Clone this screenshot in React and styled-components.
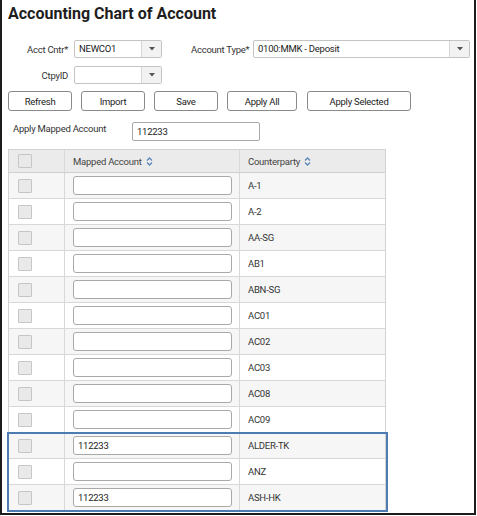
import React from 'react';
import styled, { createGlobalStyle } from 'styled-components';

const GlobalStyle = createGlobalStyle`
  html, body { margin: 0; padding: 0; background: #fff; }
  body { font-family: Roboto, "Liberation Sans", Arial, sans-serif; color: #333; }
`;

const rows = [
  { cp: 'A-1', val: '' },
  { cp: 'A-2', val: '' },
  { cp: 'AA-SG', val: '' },
  { cp: 'AB1', val: '' },
  { cp: 'ABN-SG', val: '' },
  { cp: 'AC01', val: '' },
  { cp: 'AC02', val: '' },
  { cp: 'AC03', val: '' },
  { cp: 'AC08', val: '' },
  { cp: 'AC09', val: '' },
];

const picked = [
  { cp: 'ALDER-TK', val: '112233' },
  { cp: 'ANZ', val: '' },
  { cp: 'ASH-HK', val: '112233' },
];

const SortIcon = () => (
  <svg width="7" height="9" viewBox="0 0 7 9">
    <path d="M1 3.5 L3.5 1 L6 3.5 M1 5.5 L3.5 8 L6 5.5" fill="none" stroke="#5b86b8" strokeWidth="1.3" />
  </svg>
);

const Select = ({ value, width }) => (
  <SelectBox $width={width}>
    <SelectValue>{value}</SelectValue>
    <SelectArrow>
      <svg width="6" height="4" viewBox="0 0 6 4">
        <path d="M0 0 H6 L3 3.5 Z" fill="#555" />
      </svg>
    </SelectArrow>
  </SelectBox>
);

const Row = ({ item, odd }) => (
  <TRow $odd={odd}>
    <CheckCell><Check /></CheckCell>
    <InputCell><CellInput defaultValue={item.val} /></InputCell>
    <TextCell>{item.cp}</TextCell>
  </TRow>
);

const App = () => {
  return (
    <>
      <GlobalStyle />
      <Frame>
        <Title>Accounting Chart of Account</Title>
        <FieldRow $top={15}>
          <Label>Acct Cntr*</Label>
          <Select value="NEWCO1" width={88} />
          <Label $wide>Account Type*</Label>
          <Select value="0100:MMK - Deposit" width={217} />
        </FieldRow>
        <FieldRow $top={8}>
          <Label>CtpyID</Label>
          <Select value="" width={88} />
        </FieldRow>
        <ButtonRow>
          <Button $w={64}>Refresh</Button>
          <Button $w={64}>Import</Button>
          <Button $w={64}>Save</Button>
          <Button $w={70}>Apply All</Button>
          <Button $w={104} $gap={10}>Apply Selected</Button>
        </ButtonRow>
        <ApplyRow>
          <ApplyLabel>Apply Mapped Account</ApplyLabel>
          <ApplyInput defaultValue="112233" />
        </ApplyRow>
        <Table>
          <THead>
            <CheckCell><Check /></CheckCell>
            <HeadCell>Mapped Account <SortIcon /></HeadCell>
            <HeadCell>Counterparty <SortIcon /></HeadCell>
          </THead>
          {rows.map((r, i) => (
            <Row key={r.cp} item={r} odd={i % 2 === 0} />
          ))}
          <Highlight>
            {picked.map((r, i) => (
              <Row key={r.cp} item={r} odd={i % 2 === 0} />
            ))}
          </Highlight>
        </Table>
      </Frame>
    </>
  );
};

export default App;

const smallText = `
  font-family: Roboto, "Liberation Sans", Arial, sans-serif;
  font-size: 9.5px;
  letter-spacing: -0.25px;
`;

const Frame = styled.div`
  box-sizing: border-box;
  width: 476px;
  height: 515px;
  border: 2px solid #1c1c1c;
  border-top: none;
  padding: 3px 0 0 6px;
`;

const Title = styled.h1`
  margin: 0;
  font-size: 16px;
  line-height: 22px;
  font-weight: 700;
  color: #1e1e1e;
`;

const FieldRow = styled.div`
  display: flex;
  align-items: center;
  height: 18px;
  margin-top: ${p => p.$top}px;
`;

const Label = styled.span`
  width: ${p => (p.$wide ? 57 : 60)}px;
  margin-left: ${p => (p.$wide ? 29 : 0)}px;
  margin-right: ${p => (p.$wide ? 5 : 6)}px;
  text-align: right;
  ${smallText}
  color: #333;
  white-space: nowrap;
`;

const SelectBox = styled.div`
  box-sizing: border-box;
  width: ${p => p.$width}px;
  height: 18px;
  display: flex;
  border: 1px solid #c4c4c4;
  border-radius: 2px;
  background: #fff;
`;

const SelectValue = styled.div`
  flex: 1;
  padding-left: 4px;
  ${smallText}
  line-height: 16px;
  color: #222;
`;

const SelectArrow = styled.div`
  width: 19px;
  display: flex;
  align-items: center;
  justify-content: center;
  border-left: 1px solid #d6d6d6;
  background: #f2f2f2;
`;

const ButtonRow = styled.div`
  display: flex;
  margin-top: 7px;
  gap: 9px;
`;

const Button = styled.button`
  box-sizing: border-box;
  width: ${p => p.$w}px;
  height: 20px;
  margin-left: ${p => (p.$gap ? p.$gap - 9 : 0)}px;
  padding: 0;
  border: 1px solid #8a8a8a;
  border-radius: 3px;
  background: #fff;
  ${smallText}
  color: #222;
`;

const ApplyRow = styled.div`
  display: flex;
  align-items: flex-start;
  margin-top: 11px;
  height: 18px;
`;

const ApplyLabel = styled.span`
  width: 119px;
  padding-left: 5px;
  padding-top: 1px;
  line-height: 12px;
  ${smallText}
  color: #333;
`;

const ApplyInput = styled.input`
  box-sizing: border-box;
  width: 128px;
  height: 19px;
  border: 1px solid #a9a9a9;
  border-radius: 2px;
  padding: 0 4px;
  ${smallText}
  color: #222;
  outline: none;
`;

const Table = styled.div`
  width: 376px;
  margin-top: 9px;
  border: 1px solid #d2d2d2;
  border-bottom: none;
`;

const TRow = styled.div`
  display: grid;
  grid-template-columns: 56px 175px 1fr;
  height: 26px;
  border-bottom: 1px solid #d8d8d8;
  box-sizing: border-box;
  background: ${p => (p.$odd ? '#f6f6f6' : '#fff')};
`;

const THead = styled(TRow)`
  height: 23px;
  background: #ebebeb;
  border-bottom: 1px solid #cfcfcf;
`;

const CheckCell = styled.div`
  display: flex;
  align-items: center;
  padding-left: 9px;
  border-right: 1px solid #d8d8d8;
`;

const Check = styled.span`
  box-sizing: border-box;
  width: 14px;
  height: 14px;
  border: 1px solid #c6c6c6;
  border-radius: 1px;
  background: #e9e9e9;
`;

const HeadCell = styled.div`
  display: flex;
  align-items: center;
  gap: 4px;
  padding-left: 8px;
  ${smallText}
  color: #444;
  border-right: 1px solid #d8d8d8;
  &:last-child { border-right: none; }
`;

const InputCell = styled.div`
  display: flex;
  align-items: center;
  padding-left: 8px;
  border-right: 1px solid #d8d8d8;
`;

const CellInput = styled.input`
  box-sizing: border-box;
  width: 159px;
  height: 19px;
  border: 1px solid #a9a9a9;
  border-radius: 3px;
  padding: 0 4px;
  background: #fff;
  ${smallText}
  color: #222;
  outline: none;
`;

const TextCell = styled.div`
  display: flex;
  align-items: center;
  padding-left: 8px;
  ${smallText}
  color: #333;
`;

const Highlight = styled.div`
  outline: 2px solid #4e7cb2;
  outline-offset: -1px;
  margin-right: -2px;
  margin-left: -1px;
  padding-left: 1px;
  padding-right: 2px;
  position: relative;
`;
